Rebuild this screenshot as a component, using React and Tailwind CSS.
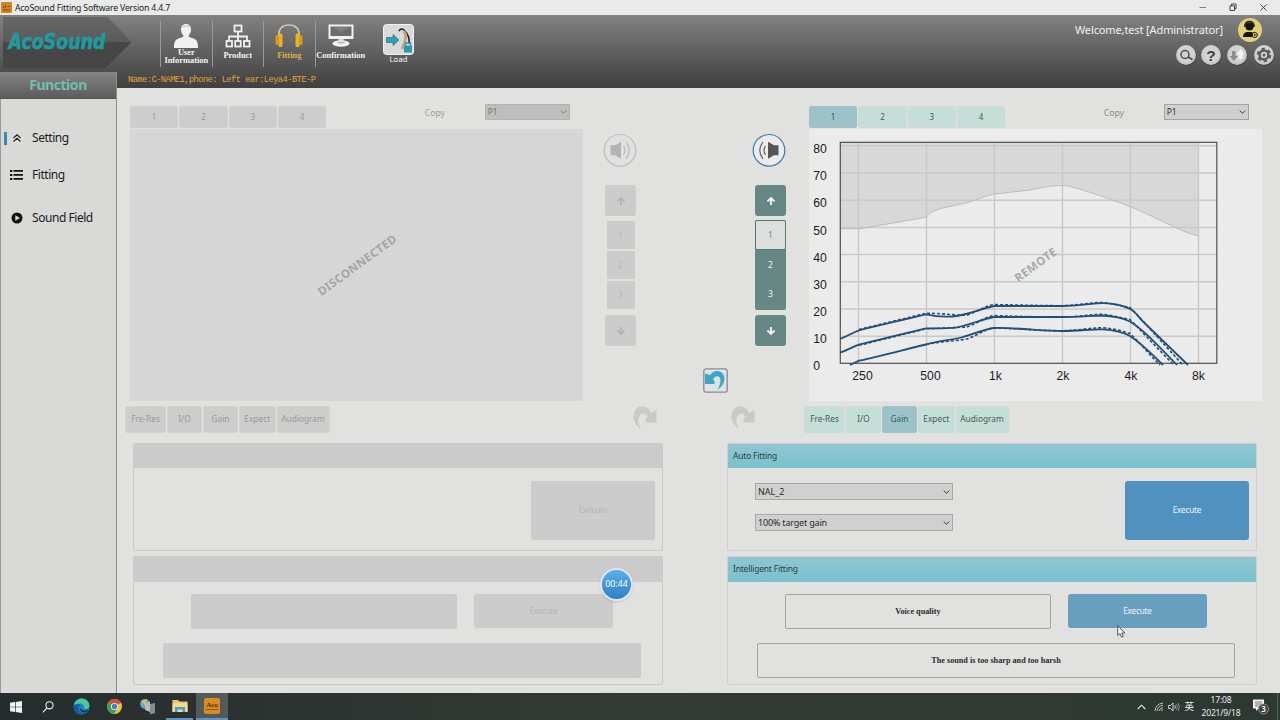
import React from "react";

const SANS = "font-['Noto_Sans','Open_Sans',sans-serif]";

function Logo() {
  return (
    <svg className="block h-[57px] w-[136px] shrink-0" viewBox="0 15 136 57">
      <defs>
        <linearGradient id="lg" x1="0" y1="0" x2="0" y2="1">
          <stop offset="0" stopColor="#666" />
          <stop offset="0.49" stopColor="#5b5b5b" />
          <stop offset="0.5" stopColor="#474747" />
          <stop offset="1" stopColor="#454545" />
        </linearGradient>
      </defs>
      <path d="M3 17H107L132 42L107 68H5Q3 68 3 66Z" fill="url(#lg)" />
      <path d="M107 16L132 42L107 68" fill="none" stroke="#6f6f6f" strokeWidth="0.6" />
      <text x="8.500" y="48.500" textLength="97" lengthAdjust="spacingAndGlyphs" fontFamily="DejaVu Sans" fontWeight="700" fontStyle="italic" fontSize="20.500" fill="#1f9a9e" stroke="#1f9a9e" strokeWidth="0.700">
        AcoSound
      </text>
    </svg>
  );
}

function UserIcon() {
  return (
    <svg className="h-[26px] w-[26px]" viewBox="0 0 26 26" fill="#f1f1f1">
      <path d="M13 1C9.500 1 8 3.600 8 6.700C8 9.200 9.400 11.600 10.500 12.500C10.500 14 8.800 14.500 5.500 15.600C2 16.800 1 19.500 1 25H25C25 19.500 24 16.800 20.500 15.600C17.200 14.500 15.500 14 15.500 12.500C16.600 11.600 18 9.200 18 6.700C18 3.600 16.500 1 13 1Z" />
      <path d="M9.500 4Q13 1.500 16.500 4" stroke="#aaa" strokeWidth="0.8" fill="none" />
    </svg>
  );
}

function ProductIcon() {
  return (
    <svg className="h-[26px] w-[26px]" viewBox="0 0 26 26" fill="none" stroke="#f1f1f1" strokeWidth="1.800">
      <rect x="9.500" y="2.500" width="7" height="6" />
      <path d="M13 8.500V18M4 18V13.500H22V18" />
      <rect x="1.500" y="18" width="5.500" height="5.500" />
      <rect x="10.200" y="18" width="5.500" height="5.500" />
      <rect x="19" y="18" width="5.500" height="5.500" />
    </svg>
  );
}

function HeadphonesIcon() {
  return (
    <svg className="h-[26px] w-[30px]" viewBox="0 0 30 26">
      <path d="M5 14C4 5 9 2 15 2S26 5 25 14" fill="none" stroke="#cfc9ad" strokeWidth="1.700" />
      <rect x="1.500" y="12" width="3" height="10" rx="1.500" fill="#d79a1c" />
      <rect x="25.500" y="12" width="3" height="10" rx="1.500" fill="#d79a1c" />
      <rect x="4.500" y="10.500" width="4" height="13.500" rx="1.500" fill="#edb020" />
      <rect x="21.500" y="10.500" width="4" height="13.500" rx="1.500" fill="#edb020" />
    </svg>
  );
}

function MonitorIcon() {
  return (
    <svg className="h-[26px] w-[28px]" viewBox="0 0 28 26">
      <rect x="1.500" y="1.500" width="25" height="14.500" fill="#f1f1f1" />
      <rect x="3.500" y="3.500" width="21" height="9.500" fill="#6c6c6c" />
      <path d="M4 4L24 4L14 9Z" fill="#7d7d7d" />
      <path d="M11.500 16H16.500V19H11.500Z" fill="#d7d7d7" />
      <ellipse cx="14" cy="20.500" rx="8.500" ry="3.300" fill="#f1f1f1" />
      <ellipse cx="14" cy="19.500" rx="4" ry="1" fill="#bbb" />
    </svg>
  );
}

function LoadIcon() {
  return (
    <svg className="h-[31px] w-[31px]" viewBox="0 0 31 31">
      <rect x="0.500" y="0.500" width="30" height="30" rx="3" fill="#dadada" stroke="#f2f2f2" />
      <path d="M3.500 13.500H10V10.500L16 16L10 21.500V18.500H3.500Z" fill="#2ba3b4" stroke="#3b6a70" strokeWidth="0.700" />
      <path d="M16 7Q18 3.500 21 6Q27 11 26 20" fill="none" stroke="#222" strokeWidth="1.600" />
      <path d="M21 7Q25 13 19 25" fill="none" stroke="#c7a57a" strokeWidth="3" />
      <rect x="21" y="21.500" width="8" height="7" fill="#2499a8" />
      <path d="M22.500 21.500V19H27.500V21.500" fill="none" stroke="#2499a8" strokeWidth="1.300" />
    </svg>
  );
}

function NavItem({ icon, label, gold, two }) {
  return (
    <div className="flex h-[46px] w-[51.500px] flex-col items-center border-l border-[#9a9a9a] pt-[2px]">
      {icon}
      <div
        className={
          "flex flex-col items-center whitespace-nowrap font-['Liberation_Serif',serif] text-[8.400px] font-bold " +
          (gold ? "text-[#e0b040] " : "text-[#f4f4f4] ") +
          (two ? "mt-0 leading-[8px]" : "mt-[3px] leading-[8px]")
        }
      >
        {label.map((l) => (
          <span key={l}>{l}</span>
        ))}
      </div>
    </div>
  );
}

function RoundIcon({ children }) {
  return (
    <svg className="h-[22px] w-[22px]" viewBox="0 0 22 22">
      <circle cx="11.400" cy="11.600" r="10.200" fill="#3b3b3b" />
      <circle cx="11" cy="11" r="10" fill="#c6c6c6" />
      <circle cx="11" cy="10" r="8.500" fill="#d2d2d2" />
      {children}
    </svg>
  );
}

function Header() {
  return (
    <header className="flex h-[73px] shrink-0 bg-gradient-to-b from-[#828282] to-[#404040]">
      <Logo />
      <nav className="ml-[24px] flex h-[57px] pt-[6px]">
        <NavItem icon={<UserIcon />} label={["User", "Information"]} two />
        <NavItem icon={<ProductIcon />} label={["Product"]} />
        <NavItem icon={<HeadphonesIcon />} label={["Fitting"]} gold />
        <NavItem icon={<MonitorIcon />} label={["Confirmation"]} />
        <div className="ml-[17px] flex flex-col items-center pt-[3px]">
          <LoadIcon />
          <span className="mt-[1px] font-['DejaVu_Sans',sans-serif] text-[7.500px] leading-[8px] text-[#f0f0f0]">Load</span>
        </div>
      </nav>
      <div className="ml-auto flex flex-col items-end">
        <div className="mt-[3px] flex items-center pr-[18px]">
          <span className={SANS + " mr-[15px] whitespace-nowrap text-[11px] leading-[24px] tracking-[-0.120px] text-[#f0f0e8]"}>
            Welcome,test [Administrator]
          </span>
          <svg className="h-[24px] w-[24px]" viewBox="0 0 24 24">
            <circle cx="12" cy="12" r="12" fill="#e0d07c" />
            <path d="M5 19Q5 14.500 9 14H13Q17 14.500 18 19Z" fill="#161410" />
            <circle cx="11.500" cy="8.500" r="4" fill="#161410" />
            <path d="M7 9V7Q8 3.500 11.500 3.500T16 7V9" fill="none" stroke="#161410" strokeWidth="1.500" />
            <circle cx="16.700" cy="17" r="2.600" fill="#e0d07c" stroke="#161410" strokeWidth="1" />
            <circle cx="16.700" cy="17" r="0.900" fill="#161410" />
          </svg>
        </div>
        <div className="mt-[2px] flex gap-[4px] pr-[5px]">
          <RoundIcon>
            <circle cx="10" cy="10.500" r="4" fill="none" stroke="#4c4c48" strokeWidth="1.500" />
            <path d="M13 13L17.500 15.500" stroke="#4c4c48" strokeWidth="2" />
          </RoundIcon>
          <div className="-ml-px">
            <RoundIcon>
              <text x="11" y="16.500" textAnchor="middle" fontFamily="Liberation Sans" fontWeight="700" fontSize="15.500" fill="#3f3f3f">?</text>
            </RoundIcon>
          </div>
          <RoundIcon>
            <path d="M6 7H9.500V12H12L7.800 17L3.500 12H6Z" fill="#8e8e8e" />
            <path d="M12.500 15V10.500H10.500L14.500 5L18.500 10.500H16.500V15Z" fill="#f3f3f3" />
          </RoundIcon>
          <div className="ml-px">
            <RoundIcon>
              <circle cx="11" cy="11" r="4.500" fill="none" stroke="#5a5a5a" strokeWidth="2.500" />
              <circle cx="11" cy="11" r="6.300" fill="none" stroke="#5a5a5a" strokeWidth="2" strokeDasharray="3.300 3.300" />
              <circle cx="11" cy="11" r="1.500" fill="#5a5a5a" />
            </RoundIcon>
          </div>
        </div>
      </div>
    </header>
  );
}

function Sidebar() {
  const t = SANS + " text-[12px] leading-[16px] tracking-[-0.450px] text-[#1c1c1c]";
  return (
    <aside className="z-10 -mt-[16px] flex w-[117px] shrink-0 flex-col border-r border-[#8d8d8d] bg-[#d9d9d8]">
      <div className="flex h-[27px] w-[116px] items-center justify-center border-b border-[#555] bg-gradient-to-b from-[#858585] to-[#5c5c5c]">
        <span className={SANS + " text-[14px] font-bold leading-[20px] tracking-[-0.450px] text-[#72bdb0]"}>Function</span>
      </div>
      <div className="flex flex-1 flex-col border-l border-[#9b9b9b] pl-[3px]">
        <div className="mt-[31px] flex h-[16px] items-center">
          <div className="h-[13px] w-[3px] bg-[#3c86ba]" />
          <svg className="ml-[5px] h-[10px] w-[10px]" viewBox="0 0 10 10" fill="none" stroke="#222" strokeWidth="1.100">
            <path d="M1.500 5L5 1.800L8.500 5M1.500 8.500L5 5.300L8.500 8.500" />
          </svg>
          <span className={t + " ml-[10px]"}>Setting</span>
        </div>
        <div className="mt-[21px] flex h-[16px] items-center">
          <svg className="ml-[6px] h-[10px] w-[13px]" viewBox="0 0 13 10" fill="#111">
            <path d="M0 0H2.300V2H0ZM3.500 0H13V1.700H3.500ZM0 4H2.300V6H0ZM3.500 4H13V5.700H3.500ZM0 8H2.300V10H0ZM3.500 8H13V9.700H3.500Z" />
          </svg>
          <span className={t + " ml-[9px]"}>Fitting</span>
        </div>
        <div className="mt-[27px] flex h-[16px] items-center">
          <svg className="ml-[7px] h-[12px] w-[12px]" viewBox="0 0 12 12">
            <circle cx="6" cy="6" r="5.500" fill="#111" />
            <path d="M4.300 3.200L9 6L4.300 8.800Z" fill="#d9d9d8" />
          </svg>
          <span className={t + " ml-[9px]"}>Sound Field</span>
        </div>
      </div>
    </aside>
  );
}

function Select({ children, className, size }) {
  return (
    <div className={"flex items-center justify-between border " + className}>
      <span className={SANS + " pl-[2px] leading-none " + (size || "text-[8.500px]")}>{children}</span>
      <svg className="mr-[2px] h-[6px] w-[7px]" viewBox="0 0 7 6" fill="none" stroke="currentColor" strokeWidth="0.900">
        <path d="M0.700 1.500L3.500 4.300L6.300 1.500" />
      </svg>
    </div>
  );
}

function ProgramTabs({ on }) {
  return (
    <div className="flex h-[41px] shrink-0">
      <div className="mt-[18px] flex h-[22px] gap-[1px]">
        {["1", "2", "3", "4"].map((n, i) => (
          <div
            key={n}
            className={
              SANS +
              " flex w-[48.300px] items-center justify-center rounded-[2px] border text-[8px] " +
              (on
                ? i === 0
                  ? "border-[#a9bfc2] bg-[#9cc3ca] text-[#33585c]"
                  : "border-[#ccd9d4] bg-[#c5dfd8] text-[#435b55]"
                : "border-[#d0d0d0] bg-[#cdcdcd] text-[#9b9b9b]")
            }
          >
            {n}
          </div>
        ))}
      </div>
      <span className={SANS + " ml-[98.500px] mt-[18px] w-[21px] text-[8.700px] leading-[14px] " + (on ? "text-[#7d9187]" : "text-[#9da09c]")}>Copy</span>
      <Select
        className={
          "ml-[39px] mt-[16px] h-[16px] w-[85px] " +
          (on ? "border-[#a3a3a3] bg-[#cfcfcf] text-[#333]" : "border-[#b1b1b1] bg-[#bebebe] text-[#777]")
        }
      >
        P1
      </Select>
    </div>
  );
}

const SOLID = [
  "M840 339C848 336 852 333 859 330.300C880 325 905 319.500 926 314.300C933 316 944 317 952 316.500C966 315.500 980 309 994 306H1062C1080 305.500 1094 303 1104 303.200C1115 303.500 1122 305.500 1130 308.800C1136 312 1139 318 1145 323.500L1188 365",
  "M840 352.700C848 350 852 347 859 344.600C880 339.500 905 333.500 926 328.300C938 328.500 948 328.500 957 327.300C970 325 982 319 994 317H1062C1080 317 1092 315.500 1102 315.500C1114 316 1122 317.500 1130 321.500C1142 329 1152 339 1177 365",
  "M850 365L859 360.700C880 356 905 349.500 926 344.500C939 340.500 952 340 963 337C975 333.500 985 329 994 328C1020 327.500 1040 331 1062 331C1080 331 1090 329 1103 329.300C1115 330 1123 332 1130 336C1141 343 1152 354 1163 365",
];
const DASHED = [
  "M859 329.500L926 313.300C940 313 955 315.500 967 315.300C978 311 985 306 994 304.600C1020 305 1040 305.700 1062 305.700C1080 305 1090 302.500 1103 302.500C1115 304 1122 306 1130 307.500C1140 317 1148 327 1183 365",
  "M859 345.300L926 328.800C940 328.500 955 327.500 967 327C978 323 985 317 994 315.600C1020 316.500 1040 317 1062 317C1080 317 1090 314.300 1103 314.300C1115 316 1122 318 1130 319.500C1140 329 1148 339 1174 365",
  "M926 344.500C940 341.500 955 341 967 339C978 335 985 329 994 328C1020 328.500 1040 330.700 1062 330.700C1080 330.500 1090 327.700 1103 327.700C1115 329 1122 331 1130 333.500C1140 343 1148 353 1160 365",
];
const LIMIT =
  "L840 228.700H860L926 217.300C930 213 932 210.500 945 207.500C960 204 965 204 975 200C984 197 988 195 996 193.800L1030 190C1045 187 1052 185.500 1062 185.600C1068 186 1070 186.300 1074 187.500C1100 195 1115 201 1130 206.500C1155 217 1165 223 1185 231.800L1198.500 236.200";

function Chart() {
  return (
    <svg className="block h-[272px] w-[453px] bg-[#ebebeb]" viewBox="809 129 453 272">
      <path d={"M840 142" + LIMIT + "V142Z"} fill="#d8d8d8" />
      <g stroke="#c8caca" strokeWidth="1.500">
        {[145.7, 173, 200.2, 227.5, 254.6, 281.8, 309, 336.2].map((y) => (
          <line key={y} x1="840" x2="1217" y1={y} y2={y} />
        ))}
        {[858.5, 926.5, 994.5, 1062.5, 1130.5, 1198.5].map((x) => (
          <line key={x} x1={x} x2={x} y1="142" y2="363" />
        ))}
      </g>
      <path d={"M840 228.700" + LIMIT} fill="none" stroke="#bcbcbc" strokeWidth="1" />
      <rect x="840.300" y="142.300" width="376.500" height="221" fill="none" stroke="#505050" strokeWidth="1.200" />
      <g fontFamily="Liberation Sans" fontSize="12.200" fill="#1b1b1b">
        {["80", "70", "60", "50", "40", "30", "20", "10", "0"].map((t, i) => (
          <text key={t} x="813.300" y={153.2 + i * 27.1}>{t}</text>
        ))}
        {[["250", 862.5], ["500", 930.5], ["1k", 995.5], ["2k", 1063], ["4k", 1131], ["8k", 1198.5]].map(([t, x]) => (
          <text key={t} x={x} y="380" textAnchor="middle">{t}</text>
        ))}
      </g>
      <text transform="translate(1038 268) rotate(-36)" textAnchor="middle" textLength="49" fontFamily="Noto Sans" fontSize="11.500" fontWeight="700" fill="#a8a8a8">
        REMOTE
      </text>
      <g fill="none" stroke="#234f78" strokeWidth="1.800">
        {SOLID.map((d) => <path key={d} d={d} />)}
      </g>
      <g fill="none" stroke="#234f78" strokeWidth="1.600" strokeDasharray="3 2">
        {DASHED.map((d) => <path key={d} d={d} />)}
      </g>
    </svg>
  );
}

function OfflineChart() {
  return (
    <svg className="block h-[272px] w-[453px] bg-[#d6d6d6]" viewBox="130 129 453 272">
      <text transform="translate(359.500 268.500) rotate(-36)" textAnchor="middle" textLength="94" fontFamily="Noto Sans" fontSize="11.500" fontWeight="700" fill="#a5a5a5">
        DISCONNECTED
      </text>
    </svg>
  );
}

function Speaker({ on }) {
  return (
    <svg className={"h-[34px] w-[34px] " + (on ? "-scale-x-100" : "")} viewBox="0 0 34 34">
      <circle cx="17" cy="17.300" r="15.800" fill={on ? "#ececec" : "#e0e0e0"} stroke={on ? "#3f7dad" : "#bdbdbd"} strokeWidth="1.200" />
      <path d="M7.500 12.300H12L18 8.800V25.800L12 22.300H7.500Z" fill={on ? "#555" : "#b3b3b3"} />
      <path d="M20.500 12.800Q23.500 17.300 20.500 21.800M23 8.800Q29.500 17.300 23 25.800" fill="none" stroke={on ? "#666" : "#b9b9b9"} strokeWidth="1.200" />
    </svg>
  );
}

function Arrow({ down, on }) {
  return (
    <div className={"flex h-[31px] w-[31px] items-center justify-center rounded-[3px] " + (on ? "bg-[#668783]" : "bg-[#cccccc]")}>
      <svg className={"h-[10px] w-[10px] " + (down ? "rotate-180" : "")} viewBox="0 0 10 10" fill="none" stroke={on ? "#f4f7f6" : "#b5b5b5"} strokeWidth="1.800">
        <path d="M5 9V2M1.500 5.500L5 2L8.500 5.500" />
      </svg>
    </div>
  );
}

function Levels({ on }) {
  return (
    <div className={SANS + " flex w-[34px] flex-col items-center pt-[45px] text-[8.500px]"}>
      <Speaker on={on} />
      <div className={"mt-[18px] flex flex-col items-center " + (on ? "pl-[3px]" : "pl-[1px]")}>
        <Arrow on={on} />
        {on ? (
          <div className="mb-[5px] mt-[4px] flex h-[90px] w-[31px] flex-col rounded-[2px] bg-[#668783] text-[#eef3f2]">
            <div className="flex h-[30px] items-center justify-center rounded-[2px] border border-[#537973] bg-[#dcdfde] text-[#7b8684]">1</div>
            <div className="flex h-[30px] items-center justify-center">2</div>
            <div className="flex h-[29px] items-center justify-center">3</div>
          </div>
        ) : (
          <div className="mb-[6px] mt-[5px] flex h-[88px] w-[28px] flex-col gap-[2px] text-[#b6b6b6]">
            {["1", "2", "3"].map((n) => (
              <div key={n} className="flex flex-1 items-center justify-center rounded-[1px] bg-[#cccccc]">{n}</div>
            ))}
          </div>
        )}
        <Arrow on={on} down />
      </div>
    </div>
  );
}

function ViewTabs({ on }) {
  const tabs = [
    ["Fre-Res", "w-[41px]"],
    ["I/O", "w-[35px]"],
    ["Gain", "w-[35px]"],
    ["Expect", "w-[36.500px]"],
    ["Audiogram", "w-[53px]"],
  ];
  return (
    <div className="mt-[5px] flex h-[27px] gap-[1px]">
      {tabs.map(([n, w]) => (
        <div
          key={n}
          className={
            SANS + " flex items-center justify-center rounded-[2px] border text-[8.300px] " + w + " " +
            (on
              ? n === "Gain"
                ? "border-[#aac2c6] bg-[#9cc3ca] text-[#33585c]"
                : "border-[#cddad6] bg-[#c5dfd8] text-[#435b55]"
              : "border-[#d2d2d2] bg-[#cdcdcd] text-[#989b97]")
          }
        >
          {n}
        </div>
      ))}
    </div>
  );
}

function Redo() {
  return (
    <svg className="mt-[4px] h-[25px] w-[24px]" viewBox="0 0 24 25" fill="#c9c9c9">
      <path d="M8 24C2 20 0 15 0.500 10C1.500 4 5 1.500 9 1.500C14 1.500 16 4 18 8L23.500 5V17.500H12.500V13.500L14.500 11.500C12.500 8 8.500 7.500 6.500 11C4.500 14 5 19 8 24Z" />
    </svg>
  );
}

function Panel({ title, on, className, head, children }) {
  return (
    <section className={"flex w-[530px] flex-col rounded-[2px] border bg-[#e1e1e0] " + (on ? "border-[#cfcfd2] " : "border-[#c9c9c9] ") + className}>
      <div
        className={
          SANS + " flex shrink-0 items-center rounded-t-[1px] pl-[5px] text-[8.500px] tracking-[-0.200px] text-[#2c4144] " + head + " " +
          (on ? "bg-gradient-to-b from-[#91c6cf] to-[#78c1cf]" : "bg-[#cbcbcb]")
        }
      >
        {title}
      </div>
      {children}
    </section>
  );
}

function PanelColumn({ on }) {
  const exec = SANS + " flex items-center justify-center rounded-[3px] text-[8.200px] tracking-[-0.200px] ";
  const serif = "flex items-center justify-center rounded-[2px] font-['Liberation_Serif',serif] text-[8.200px] font-bold text-[#2c2c2c] ";
  const field = on ? "border border-[#a5a5a5] " : "bg-[#cccccc] ";
  return (
    <div className="flex flex-col">
      <Panel on={on} title={on ? "Auto Fitting" : ""} head="h-[24px]" className="h-[108px]">
        <div className="flex justify-between pl-[27px] pr-[7px] pt-[13px]">
          <div className="flex flex-col gap-[14px] pt-[2px]">
            {on && (
              <>
                <Select size="text-[9px]" className="h-[17px] w-[198px] border-[#a8a8a8] bg-[#cfd0cf] text-[#2b2b2b]">NAL_2</Select>
                <Select size="text-[9px] tracking-[-0.180px]" className="h-[17px] w-[198px] border-[#a8a8a8] bg-[#cfd0cf] text-[#2b2b2b]">100% target gain</Select>
              </>
            )}
          </div>
          <div className={exec + "h-[59px] w-[124px] " + (on ? "bg-[#5191bf] text-[#eef5fa]" : "bg-[#cccccc] text-[#b5b5b5]")}>Execute</div>
        </div>
      </Panel>
      <Panel on={on} title={on ? "Intelligent Fitting" : ""} head="h-[25px]" className="mt-[5px] h-[129px]">
        <div className="flex gap-[17px] pl-[57px] pt-[12px]">
          <div className={serif + field + "h-[35px] w-[266px] pt-px"}>{on ? "Voice quality" : ""}</div>
          <div className={exec + "h-[34px] w-[139px] " + (on ? "bg-[#699fbe] text-[#eef5fa]" : "bg-[#cccccc] text-[#b5b5b5]")}>Execute</div>
        </div>
        <div className={serif + field + "ml-[29px] mt-[14px] h-[35px] w-[478px] pt-px"}>{on ? "The sound is too sharp and too harsh" : ""}</div>
      </Panel>
    </div>
  );
}

function Main() {
  return (
    <main className="flex flex-1 flex-col bg-[#e1e1e0]">
      <div className="flex h-[313px] pl-[13px]">
        <div className="w-[453px]">
          <ProgramTabs />
          <OfflineChart />
        </div>
        <div className="ml-[20px]"><Levels /></div>
        <div className="flex w-[115px] items-end pb-[8px] pl-[66px]">
          <svg className="h-[25px] w-[25px]" viewBox="0 0 25 25">
            <rect x="0.800" y="0.800" width="23.400" height="23.400" rx="2.500" fill="#dfe3e4" stroke="#8a8a8a" strokeWidth="1.300" />
            <path d="M14 22C19 19 21.500 15 21.500 10.500C21 5 17.500 3 14 3C10.500 3 8.500 5 7.500 7L2 5.500V16H11.500V13L10 11.500C12 7.800 15 7.300 16.700 9.500C18.500 12.500 17 18 14 22Z" fill="#3ba7c8" />
          </svg>
        </div>
        <div><Levels on /></div>
        <div className="ml-[23px] w-[453px]">
          <ProgramTabs on />
          <Chart />
        </div>
      </div>
      <div className="flex h-[42px] pl-[8px]">
        <div className="w-[508px]"><ViewTabs /></div>
        <div className="w-[98px]"><Redo /></div>
        <div className="w-[73px]"><Redo /></div>
        <ViewTabs on />
      </div>
      <div className="flex gap-[64px] pl-[16px]">
        <PanelColumn />
        <PanelColumn on />
      </div>
    </main>
  );
}

function Taskbar() {
  return (
    <footer className={SANS + " flex h-[27px] shrink-0 items-center bg-gradient-to-r from-[#262d2e] via-[#343a34] to-[#2d3832] text-[#ececec]"}>
      <svg className="ml-[10px] h-[12px] w-[12px]" viewBox="0 0 12 12" fill="#f3f3f3">
        <path d="M0 1.700L5 1V5.700H0ZM5.700 0.900L12 0V5.700H5.700ZM0 6.300H5V11L0 10.300ZM5.700 6.300H12V12L5.700 11.100Z" />
      </svg>
      <svg className="ml-[20px] h-[12px] w-[12px]" viewBox="0 0 12 12" fill="none" stroke="#eee" strokeWidth="1.100">
        <circle cx="7.500" cy="4.300" r="3.600" />
        <path d="M5 7L0.800 11.300" />
      </svg>
      <svg className="ml-[19px] h-[17px] w-[17px]" viewBox="0 0 17 17">
        <circle cx="8.500" cy="8.500" r="8" fill="#1f7fc8" />
        <path d="M1 7C2 2 6 0.500 9 0.500C14 0.800 16.500 4.500 16.500 8C16 11 12 11.500 10.500 10C12 8 10 5.500 7 5.500C4 5.500 2 6 1 7Z" fill="#4fc59a" />
        <path d="M5.500 8C3.500 13 8 16 13 15C8 18 1 15 0.700 9C2 6 6 5.500 8 7C6.500 7 6 7.500 5.500 8Z" fill="#1559a0" />
        <path d="M7 8.500C6.500 12.500 12 13.500 15.500 11.500C14.500 13.500 13 14.500 11 14.500C7.500 14 6 11 7 8.500Z" fill="#283031" />
      </svg>
      <svg className="ml-[17px] h-[15px] w-[15px]" viewBox="0 0 16 16">
        <circle cx="8" cy="8" r="8" fill="#f0c23b" />
        <path d="M8 8L1.100 4A8 8 0 0 1 14.900 4Z" fill="#d9463a" />
        <path d="M8 8L1.100 4A8 8 0 0 0 7.500 16L11 10Z" fill="#3f9e52" />
        <circle cx="8" cy="8" r="3.800" fill="#f2f2f2" />
        <circle cx="8" cy="8" r="2.900" fill="#3d7fdc" />
      </svg>
      <svg className="ml-[17px] h-[17px] w-[17px]" viewBox="0 0 17 17">
        <circle cx="6" cy="6" r="5" fill="#5fa6b8" />
        <path d="M2 3L8 1L6 8Z" fill="#c9c36a" />
        <path d="M6 5L11 3.500V14L6 12Z" fill="#b7bdba" />
        <path d="M11 6L16 5V15L11 16.500Z" fill="#868e8c" />
      </svg>
      <div className="ml-[10px] flex h-[27px] w-[27px] flex-col items-center justify-between border-b-2 border-[#5d94bf] pt-[6px]">
        <svg className="h-[14px] w-[16px]" viewBox="0 0 16 14">
          <path d="M0.500 1H6L7.500 2.500H15.500V13H0.500Z" fill="#e9c766" />
          <path d="M0.500 4H15.500V13H0.500Z" fill="#f3d98a" />
          <path d="M3 13V8H13V13H10.500V10.500H5.500V13Z" fill="#4a9bd0" />
        </svg>
      </div>
      <div className="ml-[3px] flex h-[27px] w-[32px] flex-col items-center border-b-2 border-[#5d94bf] bg-[#535b59] pt-[5px]">
        <div className="flex h-[16px] w-[16px] flex-col items-center justify-center rounded-[2px] bg-[#dc8a24] font-['Liberation_Serif',serif] text-[7px] font-bold leading-[7px] text-[#4c2c08]">
          Aco
          <span className="h-px w-[12px] bg-[#8a5415]" />
        </div>
      </div>
      <div className="ml-auto flex h-[27px] items-center">
        <svg className="h-[6px] w-[9px]" viewBox="0 0 9 6" fill="none" stroke="#e8e8e8" strokeWidth="1.100"><path d="M0.700 5L4.500 1.200L8.300 5" /></svg>
        <svg className="ml-[8px] h-[10px] w-[10px]" viewBox="0 0 10 10" fill="none" stroke="#c9cdca" strokeWidth="0.900">
          <path d="M1 9Q1.500 2 9 1M3 9Q3.500 4 9 3.300M5 9Q5.500 6 9 5.600M7 9Q7.300 8 9 7.700" />
        </svg>
        <svg className="ml-[4px] h-[10px] w-[12px]" viewBox="0 0 12 10" fill="none" stroke="#e4e6e5" strokeWidth="0.900">
          <path d="M0.600 3.500H2.500L5 1V9L2.500 6.500H0.600ZM6.800 3.300Q8 5 6.800 6.700" />
          <path d="M8.500 2Q10.300 5 8.500 8M10.200 1Q12.500 5 10.200 9" stroke="#8a918d" />
        </svg>
        <span className="ml-[4px] font-['Noto_Sans_CJK_SC',sans-serif] text-[9.500px] leading-none">英</span>
        <div className="ml-[7px] flex w-[40px] flex-col items-center whitespace-nowrap text-[8.500px] leading-[12.500px] tracking-[-0.150px]">
          <span>17:08</span>
          <span>2021/9/18</span>
        </div>
        <svg className="ml-[11px] h-[17px] w-[18px]" viewBox="0 0 18 17">
          <path d="M1 1.500H12V10.500H6.500L4 13V10.500H1Z" fill="#f0f0f0" />
          <path d="M3 4H10M3 6H10M3 8H8" stroke="#555" strokeWidth="0.800" />
          <circle cx="11.500" cy="11" r="5" fill="#3c4440" stroke="#9ba19d" strokeWidth="0.800" />
          <text x="11.500" y="14" textAnchor="middle" fontFamily="Noto Sans" fontSize="8" fontWeight="600" fill="#fff">3</text>
        </svg>
        <div className="ml-[7px] mr-[2px] h-[27px] w-px bg-[#59625d]" />
      </div>
    </footer>
  );
}

export default function App() {
  return (
    <div className="relative flex h-[720px] w-[1280px] flex-col overflow-hidden bg-[#e1e1e0]">
      <div className="flex h-[15px] shrink-0 items-center bg-[#eaeaea]">
        <svg className="ml-[1px] h-[11px] w-[11px]" viewBox="0 0 11 11">
          <rect width="11" height="11" rx="1" fill="#cf8426" />
          <path d="M2 6L4 3.500L5 6M6.500 4.500H9M2 8H9" stroke="#7a4510" strokeWidth="0.900" fill="none" />
        </svg>
        <span className={SANS + " ml-[3px] whitespace-nowrap pt-px text-[8.700px] leading-[14px] tracking-[-0.190px] text-[#222]"}>AcoSound Fitting Software Version 4.4.7</span>
        <svg className="ml-auto mr-[12px] h-[9px] w-[70px]" viewBox="0 0 70 9" fill="none" stroke="#333" strokeWidth="0.900">
          <path d="M1.500 4.500H8" stroke="#777" />
          <path d="M32 2.800H36.500V7.500H32ZM33.500 2.800V1H38V5.800H36.500" />
          <path d="M62.500 1.500L68.500 7.500M68.500 1.500L62.500 7.500" />
        </svg>
      </div>
      <Header />
      <div className="flex min-h-0 flex-1">
        <Sidebar />
        <Main />
      </div>
      <Taskbar />
      <span className="absolute left-[128px] top-[75px] whitespace-pre font-['Liberation_Mono',monospace] text-[8.700px] leading-[11px] tracking-[-0.530px] text-[#e3a233]">
        Name:C-NAME1,phone: Left ear:Leya4-BTE-P
      </span>
      <div className={SANS + " absolute left-[600px] top-[568px] flex h-[33px] w-[33px] items-center justify-center rounded-full border-2 border-[#dbe6ee] bg-gradient-to-b from-[#5aaee6] to-[#2f7fc8] text-[8.800px] text-white shadow"}>
        00:44
      </div>
      <svg className="absolute left-[1117px] top-[625px] h-[13px] w-[9px]" viewBox="0 0 9 13">
        <path d="M0.700 0.700V10.500L3 8.500L4.600 12.200L6.300 11.400L4.800 8H7.800Z" fill="#f4f4f4" stroke="#333" strokeWidth="0.800" />
      </svg>
    </div>
  );
}
